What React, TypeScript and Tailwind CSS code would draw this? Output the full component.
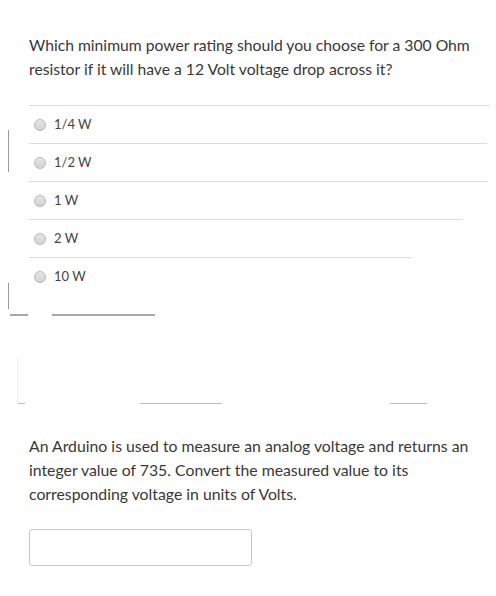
import React from 'react'

const options = [
  { label: '1/4 W', width: 'w-[461px]' },
  { label: '1/2 W', width: 'w-[458px]' },
  { label: '1 W', width: 'w-[459px]' },
  { label: '2 W', width: 'w-[434px]' },
  { label: '10 W', width: 'w-[383px]' },
]

function Radio() {
  return (
    <span className="inline-block h-[12px] w-[12px] rounded-full border border-[#b9b9b9] bg-gradient-to-b from-[#e6e6e6] to-[#d2d2d2]" />
  )
}

export default function App() {
  return (
    <div className="relative h-[596px] w-[496px] overflow-hidden bg-white font-['Lato','Noto_Sans',sans-serif] text-[#383838]">
      {/* stray edge marks from the original capture */}
      <span className="absolute left-[8px] top-[130px] h-[42px] w-px bg-[#9a9a9a]" />
      <span className="absolute left-[8px] top-[283px] h-[26px] w-px bg-[#9a9a9a]" />
      <span className="absolute left-[17px] top-[358px] h-[46px] w-px bg-[#ececec]" />

      <div className="pl-[29px] pt-[33px]">
        <p className="w-[455px] text-[15.7px] leading-[24px]">
          Which minimum power rating should you choose for a 300 Ohm resistor if it will have a 12 Volt voltage drop across it?
        </p>

        <ul className="mt-[24px]">
          {options.map((o) => (
            <li
              key={o.label}
              className={`flex h-[38px] items-center gap-[8px] border-t border-[#dcdcdc] pl-[5px] ${o.width}`}
            >
              <Radio />
              <span className="text-[13px] text-[#444]">{o.label}</span>
            </li>
          ))}
        </ul>
      </div>

      <div className="mt-[19px] flex items-center">
        <span className="ml-[10px] h-[2px] w-[18px] bg-[#a8a8a8]" />
        <span className="ml-[24px] h-[2px] w-[103px] bg-[#a8a8a8]" />
      </div>

      <div className="mt-[87px] flex items-center">
        <span className="ml-[17px] h-px w-[8px] bg-[#bdbdbd]" />
        <span className="ml-[115px] h-px w-[82px] bg-[#bdbdbd]" />
        <span className="ml-[168px] h-px w-[37px] bg-[#bdbdbd]" />
      </div>

      <div className="pl-[29px] pt-[30px]">
        <p className="w-[455px] text-[15.8px] leading-[24px]">
          An Arduino is used to measure an analog voltage and returns an integer value of 735. Convert the measured value to its corresponding voltage in units of Volts.
        </p>
        <input
          type="text"
          className="mt-[23px] block h-[37px] w-[223px] rounded-[3px] border border-[#c8c8c8] bg-white px-2 text-[14px] outline-none"
        />
      </div>
    </div>
  )
}
